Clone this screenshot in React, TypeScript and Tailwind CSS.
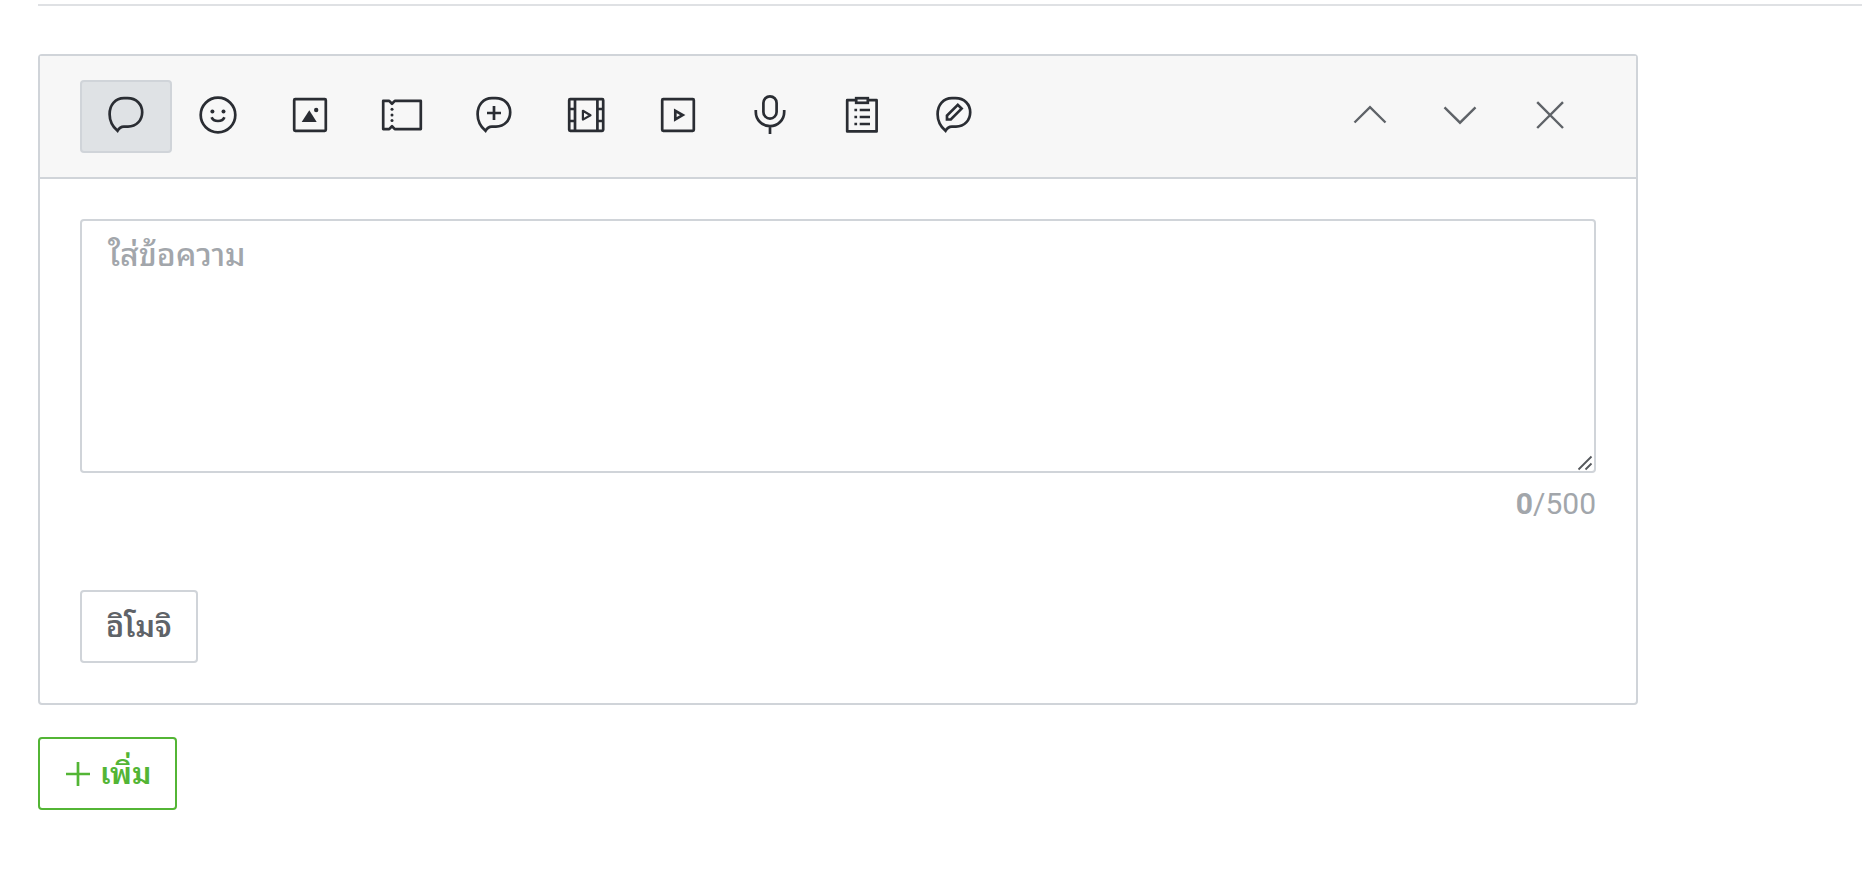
import { useState, type ReactNode } from "react";

const BUBBLE =
  "M22 6.2h3.5C34.4 6.2 40.2 12.2 40.2 20.2S34.4 34.6 26 34.6h-4.2c-3.4 0-4.6 1.2-6.3 4.2C10.4 34.4 7.6 28.4 7.6 22.2 7.6 12.5 13.5 6.2 22 6.2z";

function Icon({ children }: { children: ReactNode }) {
  return (
    <svg
      className="h-[49px] w-12 shrink-0"
      viewBox="0 0 48 49"
      fill="none"
      stroke="currentColor"
      strokeWidth="2.7"
      aria-hidden="true"
    >
      {children}
    </svg>
  );
}

const tools = [
  { label: "ข้อความ", icon: <path d={BUBBLE} /> },
  {
    label: "สติกเกอร์",
    icon: (
      <>
        <circle cx="24" cy="23" r="17.3" />
        <g fill="currentColor" stroke="none">
          <circle cx="18.4" cy="19.4" r="2" />
          <circle cx="29.5" cy="19.4" r="2" />
        </g>
        <path d="M17.6 25.3c1 2.5 3.5 3.7 6.4 3.7s5.4-1.2 6.4-3.7" />
      </>
    ),
  },
  {
    label: "รูปภาพ",
    icon: (
      <>
        <rect x="8.2" y="7.2" width="31.6" height="31.6" rx="1" />
        <g fill="currentColor" stroke="none">
          <path d="M23.3 18.3 30.7 30H15.7z" />
          <circle cx="30.2" cy="18" r="2.2" />
        </g>
      </>
    ),
  },
  {
    label: "คูปอง",
    icon: (
      <>
        <path d="M5.2 8.9h6l2.8 2.8 2.8-2.8h26v28.2h-26L14 34.3l-2.8 2.8h-6z" strokeLinejoin="round" />
        <g fill="currentColor" stroke="none">
          <circle cx="14" cy="17.3" r="1.5" />
          <circle cx="14" cy="23" r="1.5" />
          <circle cx="14" cy="28.5" r="1.5" />
        </g>
      </>
    ),
  },
  {
    label: "ริชเมสเสจ",
    icon: (
      <>
        <path d={BUBBLE} />
        <path d="M24 14v14M17 21h14" />
      </>
    ),
  },
  {
    label: "ริชวิดีโอ",
    icon: (
      <>
        <rect x="7.2" y="7.2" width="34" height="31.6" rx="1" />
        <path d="M13 7v32M35.4 7v32M7 17h6M7 29h6M35.4 17h6M35.4 29h6" />
        <path d="M20.9 18.8v8.8l7.6-4.4z" strokeWidth="2.2" strokeLinejoin="round" />
      </>
    ),
  },
  {
    label: "วิดีโอ",
    icon: (
      <>
        <rect x="8.2" y="7.2" width="31.6" height="31.6" rx="1" />
        <path d="M21.3 18.8v8.6l7.4-4.3z" />
      </>
    ),
  },
  {
    label: "ข้อความเสียง",
    icon: (
      <>
        <rect x="17.4" y="4.3" width="13.2" height="22.3" rx="6.6" />
        <path d="M9.8 18v1.9a14.2 14.2 0 0 0 28.4 0V18M24 34v8" />
      </>
    ),
  },
  {
    label: "แบบสอบถาม",
    icon: (
      <>
        <path d="M18 8.2H9.2v31.2h29.4V8.2H30" strokeLinejoin="round" />
        <rect x="18.2" y="6.2" width="11.6" height="4.6" />
        <path d="M16.4 18h2.7M16.4 25h2.7M16.4 32h2.7M21.7 18H32M21.7 25H32M21.7 32H32" />
      </>
    ),
  },
  {
    label: "การ์ดเมสเสจ",
    icon: (
      <>
        <path d={BUBBLE} />
        <path d="M17 27.5v-3.9l10.8-10.7 3.8 3.7-10.8 10.9z" />
      </>
    ),
  },
];

const controls = [
  { label: "เลื่อนขึ้น", path: "M7.5 30.5 23 15.2l15.5 15.3" },
  { label: "เลื่อนลง", path: "M7.5 15.4 23 30.7l15.5-15.3" },
  { label: "ลบ", path: "M10.2 10.2 36 36M36 10.2 10.2 36" },
];

export default function App() {
  const [active, setActive] = useState(0);
  const [message, setMessage] = useState("");

  return (
    <main className="min-h-screen bg-white pt-1 pl-[38px] font-['Roboto','Thonburi','Noto_Sans_Thai_Looped','Loma','Waree','Noto_Sans',sans-serif] text-[30px] leading-10">
      <hr className="border-t-2 border-[#dfe1e4]" />

      {/* Message editor */}
      <section className="mt-12 max-w-[1600px] rounded-[4px] border-2 border-[#d0d4d9] bg-white">
        <div className="flex border-b-2 border-[#d0d4d9] bg-[#f7f7f7] px-10 py-6">
          {tools.map((tool, i) => (
            <button
              key={tool.label}
              type="button"
              aria-label={tool.label}
              aria-pressed={i === active}
              onClick={() => setActive(i)}
              className={`flex h-[73px] w-[92px] items-center justify-center rounded-[4px] border-2 text-[#2a2d33] ${
                i === active ? "border-[#d0d4d9] bg-[#dfe2e5]" : "border-transparent"
              }`}
            >
              <Icon>{tool.icon}</Icon>
            </button>
          ))}

          <div className="ml-auto flex">
            {controls.map((control) => (
              <button
                key={control.label}
                type="button"
                aria-label={control.label}
                className="flex h-[73px] w-[90px] items-center justify-center text-[#5f6368]"
              >
                <Icon>
                  <path d={control.path} strokeWidth="2.4" />
                </Icon>
              </button>
            ))}
          </div>
        </div>

        <div className="p-10">
          <div className="relative">
            <textarea
              aria-label="ข้อความ"
              placeholder="ใส่ข้อความ"
              maxLength={500}
              value={message}
              onChange={(e) => setMessage(e.target.value)}
              className="block h-[254px] w-full resize-none rounded-[4px] border-2 border-[#d0d4d9] px-[26px] py-[14px] text-[32px] leading-10 font-medium text-[#303439] outline-none placeholder:text-[#a2a6ab]"
            />
            <svg
              className="pointer-events-none absolute right-[3px] bottom-[2px] h-4 w-4"
              viewBox="0 0 16 16"
              fill="none"
              stroke="#55585c"
              strokeWidth="1.8"
              aria-hidden="true"
            >
              <path d="M1.5 14.5l13-13M8.5 14.5l6-6" />
            </svg>
          </div>
          <p className="mt-[11px] text-right text-[#a2a6ab]">
            <b>{message.length}</b>/500
          </p>
          <button
            type="button"
            className="mt-[66px] flex h-[73px] items-center rounded-[4px] border-2 border-[#d0d4d9] px-6 font-semibold text-[#5f6368]"
          >
            อิโมจิ
          </button>
        </div>
      </section>

      {/* Add another message */}
      <button
        type="button"
        className="mt-8 flex h-[73px] items-center gap-[10px] rounded-[4px] border-2 border-[#53b535] pr-6 pl-[26px] font-semibold text-[#53b535]"
      >
        <svg className="h-6 w-6" viewBox="0 0 24 24" fill="none" stroke="currentColor" strokeWidth="2.7" aria-hidden="true">
          <path d="M12 0v24M0 12h24" />
        </svg>
        เพิ่ม
      </button>
    </main>
  );
}
